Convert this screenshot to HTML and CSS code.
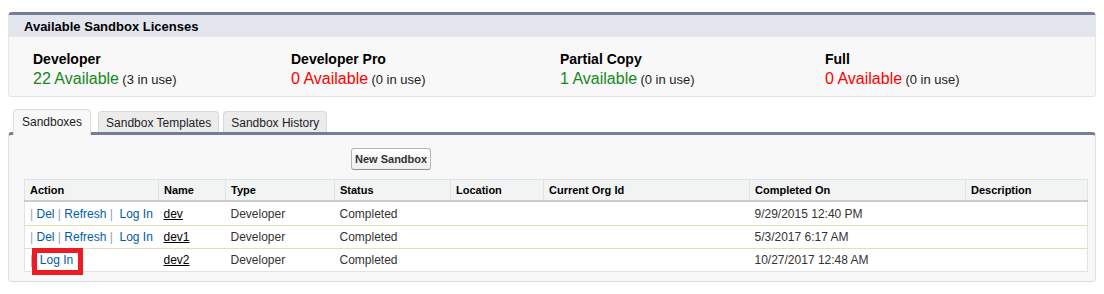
FILE: index.html
```html
<!DOCTYPE html>
<html>
<head>
<meta charset="utf-8">
<title>Sandboxes</title>
<link rel="stylesheet" href="styles.css">
</head>
<body>
<div class="page">
  <section class="lic">
    <div class="lic-head">Available Sandbox Licenses</div>
    <div class="lic-body">
      <div class="lic-item">
        <div class="lic-name">Developer</div>
        <div class="lic-val"><span class="num ok">22 Available</span> <span class="use">(3 in use)</span></div>
      </div>
      <div class="lic-item">
        <div class="lic-name">Developer Pro</div>
        <div class="lic-val"><span class="num none">0 Available</span> <span class="use">(0 in use)</span></div>
      </div>
      <div class="lic-item">
        <div class="lic-name">Partial Copy</div>
        <div class="lic-val"><span class="num ok">1 Available</span> <span class="use">(0 in use)</span></div>
      </div>
      <div class="lic-item">
        <div class="lic-name">Full</div>
        <div class="lic-val"><span class="num none">0 Available</span> <span class="use">(0 in use)</span></div>
      </div>
    </div>
  </section>

  <nav class="tabs">
    <div class="tab active">Sandboxes</div>
    <div class="tab">Sandbox Templates</div>
    <div class="tab">Sandbox History</div>
  </nav>

  <section class="tabpanel">
    <div class="btnrow"><button class="btn">New Sandbox</button></div>
    <table class="list">
      <colgroup>
        <col class="c-action"><col class="c-name"><col class="c-type"><col class="c-status">
        <col class="c-loc"><col class="c-org"><col class="c-done"><col class="c-desc">
      </colgroup>
      <thead>
        <tr>
          <th>Action</th><th>Name</th><th>Type</th><th>Status</th>
          <th>Location</th><th>Current Org Id</th><th>Completed On</th><th>Description</th>
        </tr>
      </thead>
      <tbody>
        <tr>
          <td><span class="sep">|</span> <a class="act">Del</a> <span class="sep">|</span> <a class="act">Refresh</a> <span class="sep">|</span>&nbsp; <a class="act">Log In</a></td>
          <td><a class="nm">dev</a></td><td>Developer</td><td>Completed</td><td></td><td></td><td>9/29/2015 12:40 PM</td><td></td>
        </tr>
        <tr>
          <td><span class="sep">|</span> <a class="act">Del</a> <span class="sep">|</span> <a class="act">Refresh</a> <span class="sep">|</span>&nbsp; <a class="act">Log In</a></td>
          <td><a class="nm">dev1</a></td><td>Developer</td><td>Completed</td><td></td><td></td><td>5/3/2017 6:17 AM</td><td></td>
        </tr>
        <tr>
          <td><span class="sep">|</span>&nbsp; <span class="hl"><a class="act">Log In</a></span></td>
          <td><a class="nm">dev2</a></td><td>Developer</td><td>Completed</td><td></td><td></td><td>10/27/2017 12:48 AM</td><td></td>
        </tr>
      </tbody>
    </table>
  </section>
</div>
</body>
</html>
```

FILE: styles.css
```css
html, body {
  margin: 0;
  padding: 0;
  background: #ffffff;
}
body {
  font-family: "Liberation Sans", Arial, sans-serif;
  font-size: 12px;
  color: #333333;
}
.page {
  width: 1088px;
  padding: 12px 8px 0 8px;
}

/* Licenses panel */
.lic {
  background: #f8f8f8;
  border-top: 3px solid #747e96;
  border-left: 1px solid #e6e6e6;
  border-right: 1px solid #e6e6e6;
  border-bottom: 1px solid #e2e2e2;
  border-radius: 4px;
}
.lic-head {
  background: #e3e6ee;
  height: 22px;
  line-height: 23px;
  padding-left: 15px;
  font-size: 13px;
  font-weight: bold;
  color: #000000;
}
.lic-body {
  display: grid;
  grid-template-columns: 258px 269px 265px 1fr;
  padding: 13px 0 5px 24px;
}
.lic-name {
  font-size: 14px;
  font-weight: bold;
  line-height: 18px;
  color: #000000;
}
.lic-val {
  line-height: 22px;
}
.num {
  font-size: 16px;
}
.num.ok { color: #16881b; }
.num.none { color: #ff0000; }
.use {
  font-size: 13px;
  color: #222222;
}

/* Tabs */
.tabs {
  display: flex;
  align-items: flex-end;
  margin-top: 12px;
  padding-left: 5px;
}
.tab {
  height: 14px;
  line-height: 14px;
  padding: 4px 7px 2px 7px;
  margin-right: 4px;
  background: #ececec;
  border: 1px solid #d9d9d9;
  border-bottom: none;
  border-radius: 4px 4px 0 0;
  color: #222222;
  font-size: 12px;
}
.tab.active {
  position: relative;
  z-index: 1;
  padding: 5px 8px 6px 8px;
  margin-bottom: -3px;
  margin-right: 7px;
  background: #f8f8f8;
  border-color: #dedede;
}

/* Tab panel */
.tabpanel {
  background: #f8f8f8;
  border-top: 3px solid #747e96;
  border-left: 1px solid #e2e2e2;
  border-right: 1px solid #e2e2e2;
  border-bottom: 1px solid #dcdcdc;
  border-radius: 4px;
  padding: 13px 8px 9px 15px;
}
.btnrow {
  height: 22px;
  padding-left: 327px;
}
.btn {
  height: 22px;
  margin: 0;
  padding: 0 3px;
  font-family: "Liberation Sans", Arial, sans-serif;
  font-size: 11px;
  font-weight: bold;
  color: #333333;
  background: linear-gradient(#ffffff, #efefef);
  border: 1px solid #b5b5b5;
  border-bottom-color: #8f8f8f;
  border-radius: 3px;
}

/* List table */
.list {
  margin-top: 9px;
  width: 1063px;
  table-layout: fixed;
  border-collapse: collapse;
  border: 1px solid #e0e3e5;
  background: #ffffff;
}
.c-action { width: 134px; }
.c-name { width: 67px; }
.c-type { width: 109px; }
.c-status { width: 116px; }
.c-loc { width: 93px; }
.c-org { width: 206px; }
.c-done { width: 216px; }
.c-desc { width: 122px; }

.list th {
  background: #f2f3f3;
  height: 20px;
  padding: 0 5px;
  text-align: left;
  font-size: 11px;
  font-weight: bold;
  color: #000000;
  border-left: 1px solid #e0e3e5;
  border-bottom: 2px solid #cccccc;
}
.list td {
  height: 22px;
  padding: 0 5px;
  border-top: 1px solid #e3deb8;
  white-space: nowrap;
  color: #333333;
}
.list tbody tr:first-child td {
  border-top: none;
  height: 23px;
}
.act {
  color: #015ba7;
  text-decoration: none;
}
.sep {
  color: #8ea4c2;
}
.nm {
  color: #000000;
  text-decoration: underline;
}
.hl {
  position: relative;
}
.hl::after {
  content: "";
  position: absolute;
  left: -8px;
  right: -10px;
  top: -5px;
  bottom: -8px;
  border: 5px solid #ec1c24;
}
```
